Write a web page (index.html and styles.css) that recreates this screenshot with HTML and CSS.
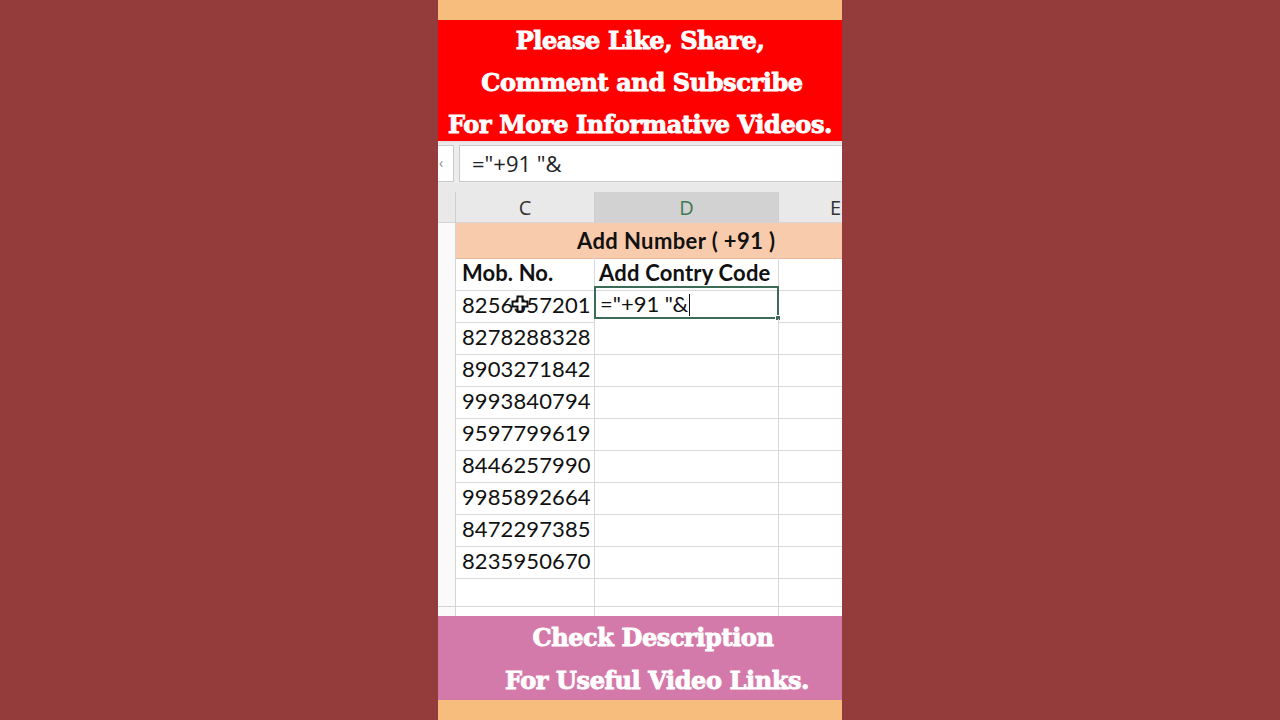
FILE: index.html
```html
<!DOCTYPE html>
<html lang="en">
<head>
<meta charset="utf-8">
<title>Add Country Code</title>
<link rel="stylesheet" href="styles.css">
</head>
<body>
<main class="panel">
  <div class="band-top"></div>
  <section class="banner banner-red">
    <p>Please Like, Share,</p>
    <p>Comment and Subscribe</p>
    <p>For More Informative Videos.</p>
  </section>
  <div class="formula-bar">
    <div class="namebox">&#8249;</div>
    <div class="formula-input">="+91 "&amp;</div>
  </div>
  <div class="col-headers">
    <div class="ch ch-row"></div>
    <div class="ch">C</div>
    <div class="ch ch-active">D</div>
    <div class="ch ch-e">E</div>
  </div>
  <div class="grid">
    <div class="row row-title">
      <div class="rh"></div>
      <div class="title-cell">Add Number ( +91 )</div>
    </div>
    <div class="row">
      <div class="rh"></div>
      <div class="cell c bold">Mob. No.</div>
      <div class="cell d bold">Add Contry Code</div>
      <div class="cell e"></div>
    </div>
    <div class="row">
      <div class="rh"></div>
      <div class="cell c cursor-host">8256357201<span class="cross"><svg width="18" height="18" viewBox="0 0 18 18"><path d="M6.5 1.5h5v5h5v5h-5v5h-5v-5h-5v-5h5z" fill="#fff" stroke="#111" stroke-width="2"/></svg></span></div>
      <div class="cell d active">="+91 "&amp;<span class="caret"></span><span class="handle"></span></div>
      <div class="cell e"></div>
    </div>
    <div class="row"><div class="rh"></div><div class="cell c">8278288328</div><div class="cell d"></div><div class="cell e"></div></div>
    <div class="row"><div class="rh"></div><div class="cell c">8903271842</div><div class="cell d"></div><div class="cell e"></div></div>
    <div class="row"><div class="rh"></div><div class="cell c">9993840794</div><div class="cell d"></div><div class="cell e"></div></div>
    <div class="row"><div class="rh"></div><div class="cell c">9597799619</div><div class="cell d"></div><div class="cell e"></div></div>
    <div class="row"><div class="rh"></div><div class="cell c">8446257990</div><div class="cell d"></div><div class="cell e"></div></div>
    <div class="row"><div class="rh"></div><div class="cell c">9985892664</div><div class="cell d"></div><div class="cell e"></div></div>
    <div class="row"><div class="rh"></div><div class="cell c">8472297385</div><div class="cell d"></div><div class="cell e"></div></div>
    <div class="row"><div class="rh"></div><div class="cell c">8235950670</div><div class="cell d"></div><div class="cell e"></div></div>
    <div class="row"><div class="rh"></div><div class="cell c"></div><div class="cell d"></div><div class="cell e"></div></div>
    <div class="row"><div class="rh"></div><div class="cell c"></div><div class="cell d"></div><div class="cell e"></div></div>
  </div>
  <section class="banner banner-pink">
    <p class="shift1">Check Description</p>
    <p class="shift2">For Useful Video Links.</p>
  </section>
  <div class="band-bottom"></div>
</main>
</body>
</html>
```

FILE: styles.css
```css
* { box-sizing: border-box; }
html, body { margin: 0; padding: 0; }
body {
  width: 1280px;
  height: 720px;
  overflow: hidden;
  background: #943c3c;
  display: flex;
  justify-content: center;
}
.panel {
  width: 404px;
  height: 720px;
  display: flex;
  flex-direction: column;
  background: #fff;
  overflow: hidden;
}
.band-top { height: 20px; background: #f7bd7c; flex: none; }
.band-bottom { height: 20px; background: #f7bd7c; flex: none; }

.banner {
  flex: none;
  display: flex;
  flex-direction: column;
  align-items: center;
  color: #fff;
  font-family: "DejaVu Serif", serif;
  font-weight: bold;
  font-size: 24px;
  letter-spacing: -0.4px;
  -webkit-text-stroke: 0.9px #fff;
}
.banner p { margin: 0; white-space: nowrap; }
.banner-red {
  height: 123px;
  background: #fe0000;
  line-height: 42px;
  border-bottom: 2px solid #e9e2e0;
}
.banner-red p { height: 42px; }
.banner-red p:nth-child(2) { margin-left: 4px; }
.banner-pink {
  height: 84px;
  background: #d47aaa;
  line-height: 43px;
}
.banner-pink .shift1 { margin-left: 26px; }
.banner-pink .shift2 { margin-left: 34px; }

.formula-bar {
  flex: none;
  height: 40px;
  background: #ececec;
  display: flex;
  gap: 5px;
  padding-top: 2px;
  padding-bottom: 1px;
}
.namebox {
  width: 16px;
  background: #fff;
  border: 1px solid #c9c9c9;
  border-left: none;
  color: #888;
  font-family: "Open Sans", sans-serif;
  font-size: 14px;
  line-height: 34px;
  padding-left: 1px;
  overflow: hidden;
}
.formula-input {
  flex: 1;
  background: #fff;
  border: 1px solid #c9c9c9;
  border-right: none;
  font-family: "Open Sans", sans-serif;
  font-size: 22px;
  color: #222;
  padding-left: 12px;
  line-height: 35px;
}

.col-headers {
  flex: none;
  height: 40px;
  background: #e9e9e9;
  display: grid;
  grid-template-columns: 18px 139px 184px 63px;
  padding-top: 9px;
  border-bottom: 1px solid #d6d6d6;
  font-family: "Open Sans", sans-serif;
  font-size: 20px;
  color: #333;
}
.ch {
  text-align: center;
  line-height: 31px;
  border-right: 1px solid #cfcfcf;
}
.ch-active {
  background: #d2d2d2;
  color: #3d7a52;
  border-bottom: 2px solid #3f7152;
}
.ch-e { text-align: right; padding-right: 1px; border-right: none; }
.ch-row { border-right: 1px solid #cfcfcf; }

.grid {
  flex: none;
  height: 393px;
  overflow: hidden;
  font-family: Lato, "Open Sans", sans-serif;
  font-size: 22px;
  color: #111;
}
.row {
  display: grid;
  grid-template-columns: 18px 139px 184px 63px;
  height: 32px;
}
.rh {
  background: #fafafa;
  border-right: 1px solid #d4d4d4;
  border-bottom: 1px solid #d4d4d4;
}
.cell {
  border-right: 1px solid #d9d9d9;
  border-bottom: 1px solid #d9d9d9;
  white-space: nowrap;
  line-height: 35px;
  padding-left: 6px;
  position: relative;
}
.cell.c { padding-left: 6px; letter-spacing: 0.1px; }
.cell.d { padding-left: 4px; }
.cell.d.bold { letter-spacing: 0.2px; }
.cell.e { border-right: none; }
.bold { font-weight: bold; }
.row-title .title-cell {
  grid-column: 2 / 5;
  background: #f8cbad;
  border-bottom: 1px solid #e7b99c;
  font-weight: bold;
  line-height: 35px;
  padding-left: 121px;
  letter-spacing: 0.4px;
  white-space: nowrap;
}
.row-title .rh { background: #fafafa; }

.active {
  border: 2px solid #3c6c58;
  margin: -1px 0 0 -1px;
  width: 185px;
  height: 33px;
  line-height: 32px;
  padding-left: 4px;
}
.caret {
  display: inline-block;
  width: 1px;
  height: 22px;
  background: #111;
  vertical-align: -4px;
  margin-left: 1px;
}
.handle {
  position: absolute;
  right: -4px;
  bottom: -4px;
  width: 6px;
  height: 6px;
  background: #3c6c58;
  border: 1px solid #fff;
}
.cross {
  position: absolute;
  left: 55px;
  top: 8px;
  line-height: 0;
}
```
